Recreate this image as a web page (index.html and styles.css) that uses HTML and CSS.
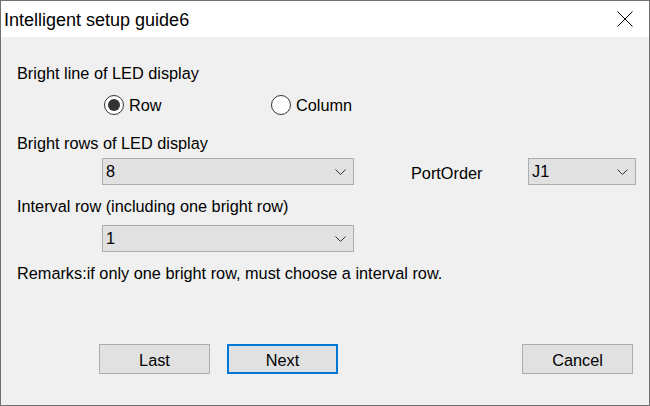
FILE: index.html
```html
<!DOCTYPE html>
<html lang="en">

<head>
    <meta charset="UTF-8">
    <meta name="viewport" content="width=device-width, initial-scale=1.0">
    <title>Intelligent setup guide6</title>
    <link rel="stylesheet" href="styles.css">
</head>

<body>
    <div class="window">
        <div class="titlebar">
            <span class="title">Intelligent setup guide6</span>
            <svg class="close" width="16" height="16" viewBox="0 0 16 16">
                <line x1="0.5" y1="0.5" x2="15.5" y2="15.5" />
                <line x1="15.5" y1="0.5" x2="0.5" y2="15.5" />
            </svg>
        </div>
        <div class="content">
            <div class="label">Bright line of LED display</div>
            <div class="radios">
                <div class="radio"><span class="radio-mark checked"></span>Row</div>
                <div class="radio"><span class="radio-mark"></span>Column</div>
            </div>

            <div class="label gap-lg">Bright rows of LED display</div>
            <div class="field-row">
                <div class="combo wide">
                    <span>8</span>
                    <svg class="chevron" width="11" height="6" viewBox="0 0 11 6">
                        <polyline points="0.5,0.5 5.5,5.5 10.5,0.5" />
                    </svg>
                </div>
                <span class="port-label">PortOrder</span>
                <div class="combo narrow">
                    <span>J1</span>
                    <svg class="chevron" width="11" height="6" viewBox="0 0 11 6">
                        <polyline points="0.5,0.5 5.5,5.5 10.5,0.5" />
                    </svg>
                </div>
            </div>

            <div class="label gap-md">Interval row (including one bright row)</div>
            <div class="field-row second">
                <div class="combo wide">
                    <span>1</span>
                    <svg class="chevron" width="11" height="6" viewBox="0 0 11 6">
                        <polyline points="0.5,0.5 5.5,5.5 10.5,0.5" />
                    </svg>
                </div>
            </div>

            <div class="label gap-md">Remarks:if only one bright row, must choose a interval row.</div>

            <div class="actions">
                <button class="btn">Last</button>
                <button class="btn default">Next</button>
                <button class="btn cancel">Cancel</button>
            </div>
        </div>
    </div>
</body>

</html>
```

FILE: styles.css
```css
* {
    box-sizing: border-box;
}

body {
    margin: 0;
    font-family: "Liberation Sans", Arial, sans-serif;
    font-size: 16.3px;
    color: #000;
}

.window {
    width: 650px;
    height: 406px;
    border: 1px solid #707070;
    background: #f0f0f0;
    display: flex;
    flex-direction: column;
}

.titlebar {
    height: 36px;
    flex: none;
    background: #fff;
    display: flex;
    align-items: center;
    justify-content: space-between;
    padding: 0 16px 0 3px;
}

.title {
    font-size: 18px;
    padding-top: 2px;
}

.close line {
    stroke: #000;
    stroke-width: 1;
}

.content {
    flex: 1;
    display: flex;
    flex-direction: column;
    padding: 26px 16px 0;
}

.label {
    line-height: 20px;
}

.gap-lg {
    margin-top: 18px;
}

.gap-md {
    margin-top: 11px;
}

/* radio buttons */
.radios {
    display: flex;
    margin: 12px 0 0 87px;
    height: 20px;
}

.radio {
    width: 167px;
    display: flex;
    align-items: center;
    gap: 5px;
    line-height: 20px;
}

.radio-mark {
    width: 20px;
    height: 20px;
    border: 1px solid #333;
    border-radius: 50%;
    background: #fff;
    display: flex;
    align-items: center;
    justify-content: center;
}

.radio-mark.checked::after {
    content: "";
    width: 12px;
    height: 12px;
    border-radius: 50%;
    background: #333;
}

/* combo boxes */
.field-row {
    display: flex;
    align-items: center;
    margin: 5px 0 0 85px;
}

.field-row > * {
    flex: none;
}

.field-row.second {
    margin-top: 9px;
}

.combo {
    height: 27px;
    border: 1px solid #adadad;
    background: #e1e1e1;
    display: flex;
    align-items: center;
    justify-content: space-between;
    padding: 0 7px 0 3px;
    line-height: 25px;
}

.combo.wide {
    width: 252px;
}

.combo.narrow {
    width: 108px;
}

.chevron polyline {
    fill: none;
    stroke: #333;
    stroke-width: 1;
}

.port-label {
    margin-left: 57px;
    width: 117px;
    padding-top: 3px;
}

/* buttons */
.actions {
    display: flex;
    gap: 17px;
    margin: 61px 0 0 82px;
}

.btn {
    font: inherit;
    color: #000;
    width: 111px;
    height: 30px;
    padding: 2px 0 0;
    border: 1px solid #adadad;
    background: #e1e1e1;
}

.btn.default {
    border: 2px solid #0078d7;
}

.btn.cancel {
    margin-left: auto;
}
```
